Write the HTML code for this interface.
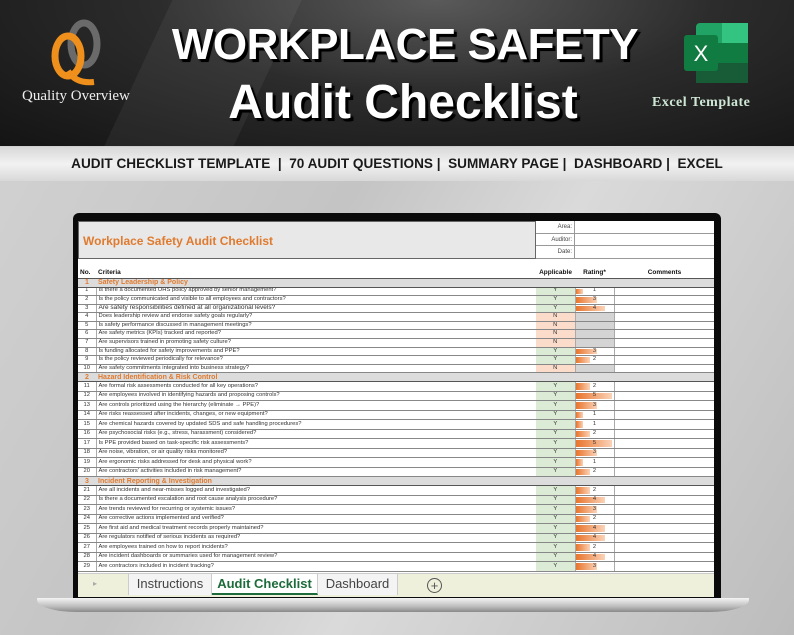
<!DOCTYPE html>
<html><head><meta charset="utf-8"><style>
*{margin:0;padding:0;box-sizing:border-box}
body{width:794px;height:635px;overflow:hidden;position:relative;font-family:"Liberation Sans",sans-serif;background:linear-gradient(120deg,#d4d4d4 0%,#c4c4c4 40%,#dadada 60%,#bcbcbc 100%)}
.hdr{position:absolute;left:0;top:0;width:794px;height:146px;background:radial-gradient(ellipse at 55% 0%,#5a5a5a 0%,#2c2c2c 45%,#141414 100%)}
.hdr:before{content:"";position:absolute;left:0;top:0;width:794px;height:146px;background:linear-gradient(115deg,transparent 0 20%,rgba(255,255,255,.05) 20% 35%,transparent 35% 100%)}
.t1,.t2{position:absolute;left:0;width:794px;text-align:center;color:#fff;font-weight:bold;font-family:"Liberation Sans",sans-serif;text-shadow:3px 3px 0 #000,2px 2px 2px #000}
.t1{top:20px;font-size:44px;left:8px;letter-spacing:-0.5px}
.t2{top:75px;font-size:48px;left:6px}
.band{position:absolute;left:0;top:147px;width:794px;height:34px;background:linear-gradient(#d8d8d8,#f2f2f2 50%,#d8d8d8);font-weight:bold;font-size:13.6px;color:#1a1a1a;text-align:center;line-height:34px}
.qo{position:absolute;left:22px;top:88px;color:#eee;font-family:"Liberation Serif",serif;font-size:15px}
.et{position:absolute;left:652px;top:95px;color:#cfe8d6;font-family:"Liberation Serif",serif;font-size:14px;font-weight:bold;letter-spacing:.5px}
.bezel{position:absolute;left:73px;top:213px;width:648px;height:388px;background:#0a0a0a;border-radius:6px 6px 0 0}
.base{position:absolute;left:37px;top:598px;width:712px;height:14px;background:linear-gradient(#f4f4f4,#bdbdbd 60%,#8a8a8a);border-radius:0 0 40px 40px / 0 0 12px 12px}
.screen{position:absolute;left:78px;top:221px;width:636px;height:376px;background:#fff;overflow:hidden}
.title{position:absolute;left:0;top:0;width:458px;height:38px;background:#e8e8e8;border:1px solid #666;color:#e07a2e;font-weight:bold;font-size:12px;line-height:38px;padding-left:4px}
.meta{position:absolute;left:458px;top:0;width:179px;height:38px}
.meta div{height:12.7px;border-bottom:1px solid #999;font-size:6px;color:#444;line-height:12px;display:flex}
.meta span{width:39px;text-align:right;padding-right:2px;border-right:1px solid #999}
table{position:absolute;left:0;top:47px;border-collapse:collapse;font-size:5.8px;color:#333;table-layout:fixed;width:637px}
td{border-bottom:1px solid #888;white-space:nowrap;overflow:hidden;padding:0 2px;line-height:1;vertical-align:middle}
td.n{text-align:center;border-right:1px solid #aaa}
tr.hd td{font-weight:bold;font-size:6.5px;color:#111;border-bottom:1px solid #555}
tr.c td{background:#dcdcdc;color:#e07a2e;font-weight:bold;font-size:7px;border-bottom:1px solid #555;border-top:1px solid #555}
td.y{background:#dcebd5;text-align:center;border-right:1px solid #aaa}
td.no{background:#fbdccb;text-align:center;border-right:1px solid #aaa}
td.r{position:relative;border-right:1px solid #aaa;text-align:center}
td.g{background:#d4d4d4;border-right:1px solid #aaa}
.bar{position:absolute;left:0;top:1px;bottom:1px;background:linear-gradient(90deg,#e8742c,#fbd3b8)}
.rv{position:relative}
.tabs{position:absolute;left:0;top:352px;width:637px;height:24px;background:#eef0dc;border-top:1px solid #ccc}
.tab{position:absolute;top:0;height:21px;font-size:13px;color:#444;line-height:20px;text-align:center;background:#f4f4f4;border-right:1px solid #ccc}
</style></head><body>
<div class="hdr">
<svg style="position:absolute;left:44px;top:18px" width="66" height="72" viewBox="0 0 66 72">
<ellipse cx="40" cy="26" rx="13" ry="21" fill="none" stroke="#6a6a6a" stroke-width="7"/>
<ellipse cx="24" cy="38" rx="13" ry="20" fill="none" stroke="#f0901c" stroke-width="7"/>
<path d="M24 53 Q32 66 50 64" fill="none" stroke="#f0901c" stroke-width="6"/>
</svg>
<div class="qo">Quality Overview</div>
<div class="t1">WORKPLACE SAFETY</div>
<div class="t2">Audit Checklist</div>
<svg style="position:absolute;left:684px;top:23px" width="66" height="62" viewBox="0 0 66 62">
<rect x="12" y="0" width="52" height="60" rx="4" fill="#21a366"/>
<rect x="38" y="0" width="26" height="20" fill="#33c481"/>
<rect x="12" y="20" width="52" height="20" fill="#107c41"/>
<rect x="12" y="40" width="52" height="20" fill="#185c37"/>
<rect x="0" y="12" width="34" height="36" rx="3" fill="#107c41"/>
<text x="17" y="38" font-family="Liberation Sans" font-size="22" fill="#fff" text-anchor="middle">X</text>
</svg>
<div class="et">Excel Template</div>
</div>
<div class="band">AUDIT CHECKLIST TEMPLATE &nbsp;| &nbsp;70 AUDIT QUESTIONS | &nbsp;SUMMARY PAGE | &nbsp;DASHBOARD | &nbsp;EXCEL</div>
<div class="bezel"></div>
<div class="base"></div>
<div class="screen">
<div class="title">Workplace Safety Audit Checklist</div>
<div class="meta"><div><span>Area:</span></div><div><span>Auditor:</span></div><div><span>Date:</span></div></div>
<table>
<colgroup><col style="width:18px"><col style="width:440px"><col style="width:39px"><col style="width:39px"><col style="width:101px"></colgroup>
<tr class="hd" style="height:10px"><td>No.</td><td>Criteria</td><td style="text-align:center">Applicable</td><td style="text-align:center">Rating*</td><td style="text-align:center">Comments</td></tr>
<tr class="c" style="height:9px"><td style="text-align:center">1</td><td colspan="4">Safety Leadership &amp; Policy</td></tr>
<tr style="height:8.6px"><td class="n">1</td><td>Is there a documented OHS policy approved by senior management?</td><td class="y">Y</td><td class="r"><div class="bar" style="width:7px"></div><span class="rv">1</span></td><td></td></tr>
<tr style="height:8.6px"><td class="n">2</td><td>Is the policy communicated and visible to all employees and contractors?</td><td class="y">Y</td><td class="r"><div class="bar" style="width:21px"></div><span class="rv">3</span></td><td></td></tr>
<tr style="height:8.6px"><td class="n">3</td><td style="font-size:6.5px">Are safety responsibilities defined at all organizational levels?</td><td class="y">Y</td><td class="r"><div class="bar" style="width:29px"></div><span class="rv">4</span></td><td></td></tr>
<tr style="height:8.6px"><td class="n">4</td><td>Does leadership review and endorse safety goals regularly?</td><td class="no">N</td><td class="g"></td><td></td></tr>
<tr style="height:8.6px"><td class="n">5</td><td>Is safety performance discussed in management meetings?</td><td class="no">N</td><td class="g"></td><td></td></tr>
<tr style="height:8.6px"><td class="n">6</td><td>Are safety metrics (KPIs) tracked and reported?</td><td class="no">N</td><td class="g"></td><td></td></tr>
<tr style="height:8.6px"><td class="n">7</td><td>Are supervisors trained in promoting safety culture?</td><td class="no">N</td><td class="g"></td><td></td></tr>
<tr style="height:8.6px"><td class="n">8</td><td>Is funding allocated for safety improvements and PPE?</td><td class="y">Y</td><td class="r"><div class="bar" style="width:21px"></div><span class="rv">3</span></td><td></td></tr>
<tr style="height:8.6px"><td class="n">9</td><td>Is the policy reviewed periodically for relevance?</td><td class="y">Y</td><td class="r"><div class="bar" style="width:14px"></div><span class="rv">2</span></td><td></td></tr>
<tr style="height:8.6px"><td class="n">10</td><td>Are safety commitments integrated into business strategy?</td><td class="no">N</td><td class="g"></td><td></td></tr>
<tr class="c" style="height:9px"><td style="text-align:center">2</td><td colspan="4">Hazard Identification &amp; Risk Control</td></tr>
<tr style="height:9.5px"><td class="n">11</td><td>Are formal risk assessments conducted for all key operations?</td><td class="y">Y</td><td class="r"><div class="bar" style="width:14px"></div><span class="rv">2</span></td><td></td></tr>
<tr style="height:9.5px"><td class="n">12</td><td>Are employees involved in identifying hazards and proposing controls?</td><td class="y">Y</td><td class="r"><div class="bar" style="width:36px"></div><span class="rv">5</span></td><td></td></tr>
<tr style="height:9.5px"><td class="n">13</td><td>Are controls prioritized using the hierarchy (eliminate → PPE)?</td><td class="y">Y</td><td class="r"><div class="bar" style="width:21px"></div><span class="rv">3</span></td><td></td></tr>
<tr style="height:9.5px"><td class="n">14</td><td>Are risks reassessed after incidents, changes, or new equipment?</td><td class="y">Y</td><td class="r"><div class="bar" style="width:7px"></div><span class="rv">1</span></td><td></td></tr>
<tr style="height:9.5px"><td class="n">15</td><td>Are chemical hazards covered by updated SDS and safe handling procedures?</td><td class="y">Y</td><td class="r"><div class="bar" style="width:7px"></div><span class="rv">1</span></td><td></td></tr>
<tr style="height:9.5px"><td class="n">16</td><td>Are psychosocial risks (e.g., stress, harassment) considered?</td><td class="y">Y</td><td class="r"><div class="bar" style="width:14px"></div><span class="rv">2</span></td><td></td></tr>
<tr style="height:9.5px"><td class="n">17</td><td>Is PPE provided based on task-specific risk assessments?</td><td class="y">Y</td><td class="r"><div class="bar" style="width:36px"></div><span class="rv">5</span></td><td></td></tr>
<tr style="height:9.5px"><td class="n">18</td><td>Are noise, vibration, or air quality risks monitored?</td><td class="y">Y</td><td class="r"><div class="bar" style="width:21px"></div><span class="rv">3</span></td><td></td></tr>
<tr style="height:9.5px"><td class="n">19</td><td>Are ergonomic risks addressed for desk and physical work?</td><td class="y">Y</td><td class="r"><div class="bar" style="width:7px"></div><span class="rv">1</span></td><td></td></tr>
<tr style="height:9.5px"><td class="n">20</td><td>Are contractors' activities included in risk management?</td><td class="y">Y</td><td class="r"><div class="bar" style="width:14px"></div><span class="rv">2</span></td><td></td></tr>
<tr class="c" style="height:9px"><td style="text-align:center">3</td><td colspan="4">Incident Reporting &amp; Investigation</td></tr>
<tr style="height:9.5px"><td class="n">21</td><td>Are all incidents and near-misses logged and investigated?</td><td class="y">Y</td><td class="r"><div class="bar" style="width:14px"></div><span class="rv">2</span></td><td></td></tr>
<tr style="height:9.5px"><td class="n">22</td><td>Is there a documented escalation and root cause analysis procedure?</td><td class="y">Y</td><td class="r"><div class="bar" style="width:29px"></div><span class="rv">4</span></td><td></td></tr>
<tr style="height:9.5px"><td class="n">23</td><td>Are trends reviewed for recurring or systemic issues?</td><td class="y">Y</td><td class="r"><div class="bar" style="width:21px"></div><span class="rv">3</span></td><td></td></tr>
<tr style="height:9.5px"><td class="n">24</td><td>Are corrective actions implemented and verified?</td><td class="y">Y</td><td class="r"><div class="bar" style="width:14px"></div><span class="rv">2</span></td><td></td></tr>
<tr style="height:9.5px"><td class="n">25</td><td>Are first aid and medical treatment records properly maintained?</td><td class="y">Y</td><td class="r"><div class="bar" style="width:29px"></div><span class="rv">4</span></td><td></td></tr>
<tr style="height:9.5px"><td class="n">26</td><td>Are regulators notified of serious incidents as required?</td><td class="y">Y</td><td class="r"><div class="bar" style="width:29px"></div><span class="rv">4</span></td><td></td></tr>
<tr style="height:9.5px"><td class="n">27</td><td>Are employees trained on how to report incidents?</td><td class="y">Y</td><td class="r"><div class="bar" style="width:14px"></div><span class="rv">2</span></td><td></td></tr>
<tr style="height:9.5px"><td class="n">28</td><td>Are incident dashboards or summaries used for management review?</td><td class="y">Y</td><td class="r"><div class="bar" style="width:29px"></div><span class="rv">4</span></td><td></td></tr>
<tr style="height:9.5px"><td class="n">29</td><td>Are contractors included in incident tracking?</td><td class="y">Y</td><td class="r"><div class="bar" style="width:21px"></div><span class="rv">3</span></td><td></td></tr>
</table>
<div class="tabs">
<div style="position:absolute;left:15px;top:5px;font-size:8px;color:#aaa">▸</div>
<div class="tab" style="left:50px;width:84px;border-left:1px solid #ccc">Instructions</div>
<div class="tab" style="left:134px;width:106px;background:#fff;color:#1d6b3a;font-weight:bold;border-bottom:2px solid #1d6b3a">Audit Checklist</div>
<div class="tab" style="left:240px;width:80px">Dashboard</div>
<div style="position:absolute;left:349px;top:4px;width:15px;height:15px;border:1px solid #555;border-radius:50%;text-align:center;font-size:13px;line-height:13px;color:#555">+</div>
</div>
</div>
</body></html>
